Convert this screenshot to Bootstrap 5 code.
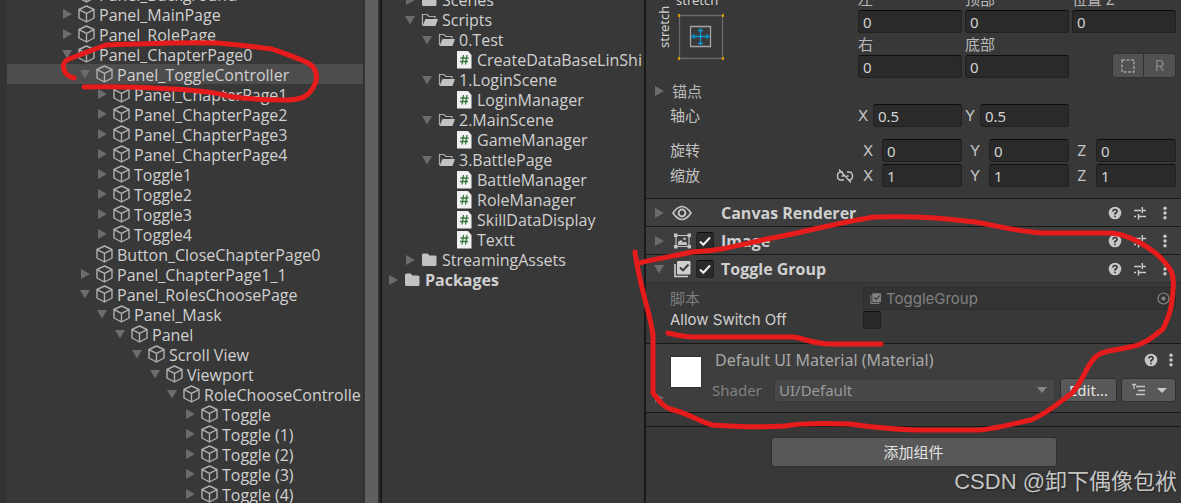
<!DOCTYPE html>
<html lang="zh-CN">
<head>
<meta charset="utf-8">
<meta name="viewport" content="width=device-width, initial-scale=1">
<title>Toggle Group</title>
<link href="https://cdn.jsdelivr.net/npm/bootstrap@5.3.0/dist/css/bootstrap.min.css" rel="stylesheet">
<style>
:root{--line:#191919;--panel:#383838;--head:#3e3e3e;--txt:#d0d0d0}
body{background:var(--panel);color:var(--txt);font:15px/20px "Noto Sans","Noto Sans CJK SC",sans-serif;height:100vh;overflow:hidden}
.editor{display:grid;grid-template-columns:minmax(0,380fr) minmax(0,266fr) minmax(0,535fr);height:100vh}
.pane{overflow:hidden;background:var(--panel)}
.hierarchy{border-left:7px solid #333}
.thumb-track{background:#5f5f5f;border-left:2px solid #333;border-right:2px solid #333;width:17px}
.project{border-left:2px solid var(--line);border-right:2px solid var(--line)}
.tree-up{margin-top:-16px}
.tree-mid{margin-top:-10px}
.tree-row{display:flex;align-items:center;height:20px;white-space:nowrap;font-family:"Open Sans","Noto Sans CJK SC",sans-serif;font-size:16px}
.tree-row svg{flex:none}
.tree-row .arrow{width:10px;height:10px;margin-right:6px}
.tree-row .glyph{width:17px;height:18px;margin-right:4px}
.tree-row a,.tree-row a:hover{color:inherit;text-decoration:none}
.tree-up a{padding-top:2px}
.picked{background:#4d4d4d}
.l0{padding-left:55px}.l1{padding-left:73px}.l2{padding-left:90px}.l3{padding-left:108px}.l4{padding-left:125px}.l5{padding-left:143px}.l6{padding-left:160px}.l7{padding-left:178px}
.p0{padding-left:6px}.p1{padding-left:23px}.p2{padding-left:40px}.p3{padding-left:58px}
.rect-form{margin-top:-12px;padding:0 5px 11px 0}
.preset{width:212px;height:90px;flex:none;gap:4px;padding-left:10px}
.mini{font-size:13px;line-height:16px}
.vert{writing-mode:vertical-rl;transform:rotate(180deg);margin-bottom:30px}
.offsets{display:grid;grid-template-columns:repeat(3,minmax(0,1fr));column-gap:3px;flex:1;min-width:0}
.prop{display:grid;grid-template-columns:212px minmax(0,1fr);margin-top:2px}
.trio{display:grid;grid-template-columns:repeat(3,minmax(0,1fr));column-gap:3px}
.cap{height:22px;line-height:22px;color:#b8b8b8;display:block}
.name{padding-left:24px;line-height:23px;color:#c4c4c4}
.box,.box:focus{width:100%;height:23px;min-width:0;padding:1px 0 0 4px;background:#2a2a2a;border:1px solid #212121;border-top-color:#0d0d0d;border-radius:3px;color:#d2d2d2;font:inherit;line-height:20px;outline:0}
.axis{font-family:Inter,sans-serif;color:#c4c4c4;width:15px;line-height:23px;flex:none}
.wide .axis{width:24px;padding-left:5px}
.ubtn{background:#585858;border:1px solid #303030;border-radius:3px;color:#e4e4e4;font:inherit;padding:0}
.dim{background:#515151;color:#858585;width:32px;height:25px}
.comp{display:flex;align-items:center;background:var(--head);border-top:1px solid var(--line);height:28px;padding:0 9px 0 8px;font:700 16px/20px "Open Sans",sans-serif}
.comp .arrow{width:10px;height:10px;margin-right:8px}
.comp .kind{width:20px;height:18px;margin-right:4px}
.comp label,.comp .plain{margin-left:7px}
.tools{display:flex;margin-left:auto;gap:11px}
.tools svg{width:14px;height:14px;flex:none}
.tick{appearance:none;width:18px;height:18px;margin:0;background:#2a2a2a;border:1px solid #212121;border-top-color:#0d0d0d;border-radius:3px;flex:none}
.tick:checked{background:#2a2a2a url("data:image/svg+xml,%3Csvg xmlns='http://www.w3.org/2000/svg' viewBox='0 0 16 16'%3E%3Cpath d='M3 8.5l3.3 3.2L13 4.5' fill='none' stroke='%23eee' stroke-width='2'/%3E%3C/svg%3E") center/16px no-repeat}
.inter{font-family:Inter,"Noto Sans CJK SC",sans-serif}
.body-group{border-top:1px solid #303030;padding:4px 5px 0 24px;height:61px}
.objref{height:23px;flex:1;background:#333;border:1px solid #2c2c2c;border-radius:3px;color:#818181;padding:0 5px}
.lab{width:193px;flex:none}
.muted{color:#7d7d7d}
.material{background:var(--head);border-top:1px solid var(--line);border-bottom:1px solid var(--line);height:70px}
.material .tools{padding-right:3px;gap:6px}
.mat-title{font-size:16px;color:#a8a8a8;padding-top:6px}
.swatch{width:32px;height:32px;background:#fff;border:1px solid #333;margin:12px 13px 0 24px;flex:none}
.shader-row{padding:8px 5px 0 0}
.shlab{width:62px;color:#808080;flex:none;margin-left:-3px}
.shader{flex:1;min-width:0;height:23px;border:1px solid #3a3a3a;border-radius:3px;color:#9a9a9a;font:inherit;line-height:20px;padding:0 4px;appearance:none;background:#474747 url("data:image/svg+xml,%3Csvg xmlns='http://www.w3.org/2000/svg' viewBox='0 0 10 10'%3E%3Cpath d='M0 2h10L5 8z' fill='%23888'/%3E%3C/svg%3E") right 7px center/10px no-repeat}
.edit{width:57px;height:24px;margin:0 4px 0 5px;flex:none}
.menu{width:55px;height:24px;flex:none}
.spacer{height:14px;border-bottom:1px solid var(--line)}
.add{width:286px;height:30px;margin-top:10px}
.marks{position:absolute;inset:0;width:100%;height:100%;pointer-events:none}
.stamp{position:absolute;right:4px;bottom:4px;font:22px/34px "Liberation Sans","Noto Sans CJK SC",sans-serif;color:#c4c4c4;text-shadow:1px 1px 2px #222;white-space:nowrap}
.fold{position:absolute;left:8px;bottom:9px;width:10px;height:10px}
</style>
</head>
<body>
<svg class="d-none">
<symbol id="right" viewBox="0 0 10 10"><path d="M1 0L10 5L1 10z" fill="#6c6c6c"/></symbol>
<symbol id="down" viewBox="0 0 10 10"><path d="M0 1H10L5 9.500z" fill="#6c6c6c"/></symbol>
<symbol id="cube" viewBox="0 0 17 18"><path d="M8.500 1L16 4.500V13L8.500 17L1 13V4.500zM1 4.700L8.500 8.300L16 4.700M8.500 8.300V17" fill="none" stroke="#b0b0b0" stroke-width="1.400" stroke-linejoin="round"/></symbol>
<symbol id="folder" viewBox="0 0 17 18"><path d="M1 4Q1 2.500 2.500 2.500H6.500L8.500 4.500H14Q15.500 4.500 15.500 6V13.500Q15.500 15 14 15H2.500Q1 15 1 13.500z" fill="#c2c2c2"/></symbol>
<symbol id="open" viewBox="0 0 17 18"><path d="M1.500 14V3.500H6L8 5.500H14V7.500" fill="none" stroke="#b0b0b0" stroke-width="1.200"/><path d="M4.500 8H17L14.500 15H1.500z" fill="#c2c2c2"/></symbol>
<symbol id="cs" viewBox="0 0 17 18"><path d="M1 0H12L15.500 4V17.500H1z" fill="#f2f2f2"/><path d="M7.500 4L6 13.500M11 4L9.500 13.500M4.500 7H12.500M4 10.500H12" stroke="#37793b" stroke-width="1.300"/></symbol>
<symbol id="help" viewBox="0 0 14 14"><circle cx="7" cy="7" r="6.300" fill="#c8c8c8"/><path d="M5 5.500Q5 3.500 7 3.500T9 5.500Q9 6.500 7 7.500V8.700M7 9.700V11.200" fill="none" stroke="#333" stroke-width="1.600"/></symbol>
<symbol id="tune" viewBox="0 0 14 14"><path d="M1 4.500H8M9 4.500H13M9.300 1V7M1 10.500H3M6 10.500H13M5.500 8V13.500" fill="none" stroke="#c8c8c8" stroke-width="1.500"/></symbol>
<symbol id="dots" viewBox="0 0 14 14"><g fill="#c8c8c8"><circle cx="7" cy="2.200" r="1.700"/><circle cx="7" cy="7" r="1.700"/><circle cx="7" cy="11.800" r="1.700"/></g></symbol>
<symbol id="eye" viewBox="0 0 20 18"><path d="M1 9Q10-4 19 9Q10 22 1 9z" fill="none" stroke="#c4c4c4" stroke-width="1.700"/><circle cx="10" cy="9" r="3.400" fill="none" stroke="#c4c4c4" stroke-width="2"/></symbol>
<symbol id="image" viewBox="0 0 20 18"><path d="M4 3.500H17V14.500H4z" fill="none" stroke="#c4c4c4" stroke-width="1.200"/><g fill="#c4c4c4"><path d="M2 1.500h3.500v3.500H2zM15.500 1.500h3.500v3.500h-3.500zM2 13h3.500v3.500H2zM15.500 13h3.500v3.500h-3.500z"/><path d="M6 13V10L9 8L11.500 10.500L13 9.500L15 11V13z"/><circle cx="12.500" cy="6.800" r="1.300"/></g></symbol>
<symbol id="group" viewBox="0 0 20 18"><path d="M3 4V16.500H16" fill="none" stroke="currentColor" stroke-width="1.600"/><rect x="5" y="1" width="13.500" height="13.500" rx="1" fill="currentColor"/><path d="M8 7.500L11 10.500L16.500 4.500" fill="none" stroke="#383838" stroke-width="1.900"/></symbol>
</svg>

<main class="editor position-relative">
<section class="pane hierarchy d-flex">
<ul class="list-unstyled tree-up mb-0 flex-grow-1 overflow-hidden">
<li class="tree-row l0"><svg class="arrow"></svg><svg class="glyph"><use href="#cube"/></svg><a href="#">Panel_Background</a></li>
<li class="tree-row l0"><svg class="arrow"><use href="#right"/></svg><svg class="glyph"><use href="#cube"/></svg><a href="#">Panel_MainPage</a></li>
<li class="tree-row l0"><svg class="arrow"><use href="#right"/></svg><svg class="glyph"><use href="#cube"/></svg><a href="#">Panel_RolePage</a></li>
<li class="tree-row l0"><svg class="arrow"><use href="#down"/></svg><svg class="glyph"><use href="#cube"/></svg><a href="#">Panel_ChapterPage0</a></li>
<li class="tree-row l1 picked"><svg class="arrow"><use href="#down"/></svg><svg class="glyph"><use href="#cube"/></svg><a href="#">Panel_ToggleController</a></li>
<li class="tree-row l2"><svg class="arrow"><use href="#right"/></svg><svg class="glyph"><use href="#cube"/></svg><a href="#">Panel_ChapterPage1</a></li>
<li class="tree-row l2"><svg class="arrow"><use href="#right"/></svg><svg class="glyph"><use href="#cube"/></svg><a href="#">Panel_ChapterPage2</a></li>
<li class="tree-row l2"><svg class="arrow"><use href="#right"/></svg><svg class="glyph"><use href="#cube"/></svg><a href="#">Panel_ChapterPage3</a></li>
<li class="tree-row l2"><svg class="arrow"><use href="#right"/></svg><svg class="glyph"><use href="#cube"/></svg><a href="#">Panel_ChapterPage4</a></li>
<li class="tree-row l2"><svg class="arrow"><use href="#right"/></svg><svg class="glyph"><use href="#cube"/></svg><a href="#">Toggle1</a></li>
<li class="tree-row l2"><svg class="arrow"><use href="#right"/></svg><svg class="glyph"><use href="#cube"/></svg><a href="#">Toggle2</a></li>
<li class="tree-row l2"><svg class="arrow"><use href="#right"/></svg><svg class="glyph"><use href="#cube"/></svg><a href="#">Toggle3</a></li>
<li class="tree-row l2"><svg class="arrow"><use href="#right"/></svg><svg class="glyph"><use href="#cube"/></svg><a href="#">Toggle4</a></li>
<li class="tree-row l1"><svg class="arrow"></svg><svg class="glyph"><use href="#cube"/></svg><a href="#">Button_CloseChapterPage0</a></li>
<li class="tree-row l1"><svg class="arrow"><use href="#right"/></svg><svg class="glyph"><use href="#cube"/></svg><a href="#">Panel_ChapterPage1_1</a></li>
<li class="tree-row l1"><svg class="arrow"><use href="#down"/></svg><svg class="glyph"><use href="#cube"/></svg><a href="#">Panel_RolesChoosePage</a></li>
<li class="tree-row l2"><svg class="arrow"><use href="#down"/></svg><svg class="glyph"><use href="#cube"/></svg><a href="#">Panel_Mask</a></li>
<li class="tree-row l3"><svg class="arrow"><use href="#down"/></svg><svg class="glyph"><use href="#cube"/></svg><a href="#">Panel</a></li>
<li class="tree-row l4"><svg class="arrow"><use href="#down"/></svg><svg class="glyph"><use href="#cube"/></svg><a href="#">Scroll View</a></li>
<li class="tree-row l5"><svg class="arrow"><use href="#down"/></svg><svg class="glyph"><use href="#cube"/></svg><a href="#">Viewport</a></li>
<li class="tree-row l6"><svg class="arrow"><use href="#down"/></svg><svg class="glyph"><use href="#cube"/></svg><a href="#">RoleChooseControlle</a></li>
<li class="tree-row l7"><svg class="arrow"><use href="#right"/></svg><svg class="glyph"><use href="#cube"/></svg><a href="#">Toggle</a></li>
<li class="tree-row l7"><svg class="arrow"><use href="#right"/></svg><svg class="glyph"><use href="#cube"/></svg><a href="#">Toggle (1)</a></li>
<li class="tree-row l7"><svg class="arrow"><use href="#right"/></svg><svg class="glyph"><use href="#cube"/></svg><a href="#">Toggle (2)</a></li>
<li class="tree-row l7"><svg class="arrow"><use href="#right"/></svg><svg class="glyph"><use href="#cube"/></svg><a href="#">Toggle (3)</a></li>
<li class="tree-row l7"><svg class="arrow"><use href="#right"/></svg><svg class="glyph"><use href="#cube"/></svg><a href="#">Toggle (4)</a></li>
</ul>
<div class="thumb-track flex-shrink-0"></div>
</section>

<section class="pane project">
<ul class="list-unstyled tree-mid mb-0">
<li class="tree-row p1"><svg class="arrow"><use href="#right"/></svg><svg class="glyph"><use href="#folder"/></svg><a href="#">Scenes</a></li>
<li class="tree-row p1"><svg class="arrow"><use href="#down"/></svg><svg class="glyph"><use href="#open"/></svg><a href="#">Scripts</a></li>
<li class="tree-row p2"><svg class="arrow"><use href="#down"/></svg><svg class="glyph"><use href="#open"/></svg><a href="#">0.Test</a></li>
<li class="tree-row p3"><svg class="arrow"></svg><svg class="glyph"><use href="#cs"/></svg><a href="#">CreateDataBaseLinShi</a></li>
<li class="tree-row p2"><svg class="arrow"><use href="#down"/></svg><svg class="glyph"><use href="#open"/></svg><a href="#">1.LoginScene</a></li>
<li class="tree-row p3"><svg class="arrow"></svg><svg class="glyph"><use href="#cs"/></svg><a href="#">LoginManager</a></li>
<li class="tree-row p2"><svg class="arrow"><use href="#down"/></svg><svg class="glyph"><use href="#open"/></svg><a href="#">2.MainScene</a></li>
<li class="tree-row p3"><svg class="arrow"></svg><svg class="glyph"><use href="#cs"/></svg><a href="#">GameManager</a></li>
<li class="tree-row p2"><svg class="arrow"><use href="#down"/></svg><svg class="glyph"><use href="#open"/></svg><a href="#">3.BattlePage</a></li>
<li class="tree-row p3"><svg class="arrow"></svg><svg class="glyph"><use href="#cs"/></svg><a href="#">BattleManager</a></li>
<li class="tree-row p3"><svg class="arrow"></svg><svg class="glyph"><use href="#cs"/></svg><a href="#">RoleManager</a></li>
<li class="tree-row p3"><svg class="arrow"></svg><svg class="glyph"><use href="#cs"/></svg><a href="#">SkillDataDisplay</a></li>
<li class="tree-row p3"><svg class="arrow"></svg><svg class="glyph"><use href="#cs"/></svg><a href="#">Textt</a></li>
<li class="tree-row p1"><svg class="arrow"><use href="#right"/></svg><svg class="glyph"><use href="#folder"/></svg><a href="#">StreamingAssets</a></li>
<li class="tree-row p0 fw-bold"><svg class="arrow"><use href="#right"/></svg><svg class="glyph"><use href="#folder"/></svg><a href="#">Packages</a></li>
</ul>
</section>

<section class="pane inspector">
<form class="rect-form">
<div class="d-flex">
<div class="preset d-flex">
<span class="mini vert">stretch</span>
<div class="pt-1">
<div class="mini">stretch</div>
<svg width="48" height="48" viewBox="0 0 48 48" class="d-block mt-1"><path d="M3.500 3.500H46.500V46.500H3.500z" fill="none" stroke="#6a6a6a" stroke-width="1.300"/><path d="M14.500 14.500H34.500V34.500H14.500z" fill="none" stroke="#a5a5a5" stroke-width="1.300"/><path d="M15 24.500H34M24.500 16V33M18 22v5M31 22v5M22 18.500h5M22 31.500h5" fill="none" stroke="#0a9bd8" stroke-width="1.300"/><path d="M2 2h2v3H2zM46 2h2v3h-2zM2 45h2v3H2zM46 45h2v3h-2z" fill="#d39b00"/></svg>
</div>
</div>
<div class="offsets">
<div><label class="cap" for="lf">左</label><input class="box" id="lf" value="0"></div>
<div><label class="cap" for="tp">顶部</label><input class="box" id="tp" value="0"></div>
<div><label class="cap" for="pz">位置 Z</label><input class="box" id="pz" value="0"></div>
<div><label class="cap" for="rt">右</label><input class="box" id="rt" value="0"></div>
<div><label class="cap" for="bt">底部</label><input class="box" id="bt" value="0"></div>
<div class="d-flex justify-content-end align-items-end"><button type="button" class="ubtn dim rounded-end-0" aria-label="blueprint"><svg width="14" height="14" viewBox="0 0 14 14" class="d-block mx-auto"><rect x="1" y="1" width="12" height="12" fill="none" stroke="#a0a0a0" stroke-width="1.500" stroke-dasharray="3 1.500"/></svg></button><button type="button" class="ubtn dim inter rounded-start-0 border-start-0">R</button></div>
</div>
</div>
<div class="d-flex align-items-center ps-2 prop-head" style="margin-top:2px"><svg width="10" height="10"><use href="#right"/></svg><span class="cap ps-1 ms-1">锚点</span></div>
<div class="prop mb-2">
<span class="name">轴心</span>
<div class="trio">
<div class="d-flex"><label class="axis" for="px">X</label><input class="box" id="px" value="0.5"></div>
<div class="d-flex"><label class="axis" for="py">Y</label><input class="box" id="py" value="0.5"></div>
</div>
</div>
<div class="prop wide pt-1 mt-0">
<span class="name">旋转</span>
<div class="trio">
<div class="d-flex"><label class="axis" for="rx">X</label><input class="box" id="rx" value="0"></div>
<div class="d-flex"><label class="axis" for="ry">Y</label><input class="box" id="ry" value="0"></div>
<div class="d-flex"><label class="axis" for="rz">Z</label><input class="box" id="rz" value="0"></div>
</div>
</div>
<div class="prop wide">
<span class="name d-flex justify-content-between align-items-center">缩放<svg class="me-1" width="18" height="16" viewBox="0 0 18 16" fill="none" stroke="#c4c4c4" stroke-width="1.400"><path d="M7 4H5Q1.500 4 1.500 8T5 12H8M11 4H13Q16.500 4 16.500 8T13 12H12M5.500 8H8M10.500 8H12.500M3 1.500L15 14.500"/></svg></span>
<div class="trio">
<div class="d-flex"><label class="axis" for="sx">X</label><input class="box" id="sx" value="1"></div>
<div class="d-flex"><label class="axis" for="sy">Y</label><input class="box" id="sy" value="1"></div>
<div class="d-flex"><label class="axis" for="sz">Z</label><input class="box" id="sz" value="1"></div>
</div>
</div>
</form>

<div class="comp"><svg class="arrow"><use href="#right"/></svg><svg class="kind"><use href="#eye"/></svg><span class="tick invisible"></span><span class="plain">Canvas Renderer</span><span class="tools"><svg><use href="#help"/></svg><svg><use href="#tune"/></svg><svg><use href="#dots"/></svg></span></div>
<div class="comp"><svg class="arrow"><use href="#right"/></svg><svg class="kind"><use href="#image"/></svg><input type="checkbox" class="tick" id="im" checked><label for="im">Image</label><span class="tools"><svg><use href="#help"/></svg><svg><use href="#tune"/></svg><svg><use href="#dots"/></svg></span></div>
<div class="comp"><svg class="arrow"><use href="#down"/></svg><svg class="kind"><use href="#group"/></svg><input type="checkbox" class="tick" id="tg" checked><label for="tg">Toggle Group</label><span class="tools"><svg><use href="#help"/></svg><svg><use href="#tune"/></svg><svg><use href="#dots"/></svg></span></div>
<div class="body-group inter">
<div class="d-flex align-items-center"><span class="lab muted">脚本</span><div class="objref d-flex align-items-center"><svg class="me-1" width="13" height="13"><use href="#group"/></svg>ToggleGroup<svg class="ms-auto" width="13" height="13" viewBox="0 0 13 13"><circle cx="6.500" cy="6.500" r="5.500" fill="none" stroke="#888" stroke-width="1.200"/><circle cx="6.500" cy="6.500" r="2" fill="#888"/></svg></div></div>
<div class="d-flex align-items-center"><label class="lab" for="off">Allow Switch Off</label><input type="checkbox" class="tick" id="off"></div>
</div>
<div class="material position-relative">
<div class="d-flex">
<div class="swatch"></div>
<div class="flex-grow-1">
<div class="d-flex align-items-center mat-title">Default UI Material (Material)<span class="tools"><svg><use href="#help"/></svg><svg><use href="#dots"/></svg></span></div>
<div class="d-flex align-items-center shader-row"><label for="sh" class="shlab">Shader</label>
<select class="shader" id="sh"><option>UI/Default</option></select>
<button type="button" class="ubtn edit">Edit...</button>
<button type="button" class="ubtn menu" aria-label="preset"><svg width="36" height="14" viewBox="0 0 36 14" class="d-block mx-auto"><path d="M1 1.500h4M5 3.500h9M7 7.500h7M5 11.500h9M3 1v5" stroke="#c4c4c4" stroke-width="1.300"/><path d="M26 5h10l-5 5z" fill="#c8c8c8"/></svg></button></div>
</div>
</div>
<svg class="fold"><use href="#right"/></svg>
</div>
<div class="spacer"></div>
<div class="text-center"><button type="button" class="ubtn add">添加组件</button></div>
</section>

<svg class="marks" viewBox="0 0 1181 503" preserveAspectRatio="none" fill="none" stroke="#e61b1b" stroke-width="5" stroke-linecap="round" stroke-linejoin="round">
<path d="M74 78C62 75 60 62 69 59C82 54 95 49 106 45C145 44 175 42 218 43C240 45 258 47 272 49C286 54 298 58 308 63C316 67 319 78 314 86C308 98 300 99 290 100C265 100 245 99 228 96C210 91 190 90 172 89C140 87 115 86 84 87"/>
<path d="M635 252C639 285 650 312 653 335V393C658 400 664 407 670 409C688 413 698 421 712 425C740 427 768 427 785 426C800 423 820 423 850 424C870 427 890 429 915 430H980C1000 428 1015 423 1031 420C1048 413 1060 402 1072 393C1082 382 1085 370 1092 361C1100 349 1115 351 1130 347C1145 345 1155 335 1163 329C1170 314 1172 307 1173 290C1175 272 1170 268 1160 257C1148 246 1128 234 1110 233H1042C1010 231 995 224 966 221C935 217 905 216 875 217C850 220 800 233 767 239C740 245 720 251 692 252C670 257 655 259 639 263"/>
<path d="M668 333C685 338 700 337 720 337H794C805 339 815 344 830 344H881"/>
</svg>
<div class="stamp">CSDN @卸下偶像包袱</div>
</main>
<script src="https://cdn.jsdelivr.net/npm/bootstrap@5.3.0/dist/js/bootstrap.bundle.min.js"></script>
</body>
</html>
